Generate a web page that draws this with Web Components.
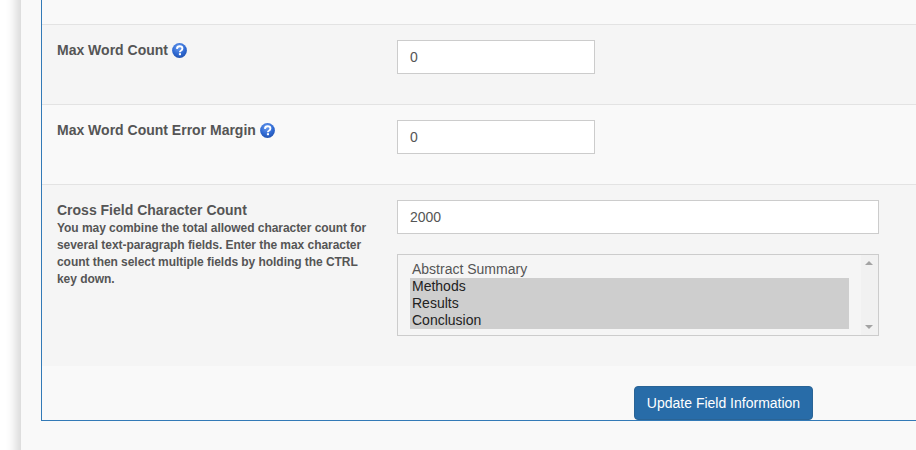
<!DOCTYPE html>
<html><head><meta charset="utf-8"><style>
html,body{margin:0;padding:0;height:450px;overflow:hidden;background:#fff}
</style></head><body>
<app-page>
<form-row label="Max Word Count" help tone="a"><text-box style="width:198px">0</text-box></form-row>
<form-row label="Max Word Count Error Margin" help tone="b"><text-box style="width:198px">0</text-box></form-row>
<form-row label="Cross Field Character Count" tone="a" tall desc="You may combine the total allowed character count for several text-paragraph fields. Enter the max character count then select multiple fields by holding the CTRL key down.">
<text-box style="width:482px">2000</text-box>
<list-box><list-opt>Abstract Summary</list-opt><list-opt selected>Methods</list-opt><list-opt selected>Results</list-opt><list-opt selected>Conclusion</list-opt></list-box>
</form-row>
<action-bar>Update Field Information</action-bar>
</app-page>
<script>
function def(name,html,init){customElements.define(name,class extends HTMLElement{constructor(){super();this.attachShadow({mode:'open'}).innerHTML=html;}connectedCallback(){init&&init(this)}})}
def('app-page',`<style>
:host{display:block;height:450px;box-sizing:border-box;padding-left:21px;background:#fff;font-family:"Liberation Sans",Arial,sans-serif;overflow:hidden}
.sheet{height:490px;margin-top:-20px;padding-top:20px;box-sizing:border-box;background:#f9f9f9;padding-left:20px;box-shadow:-8px 0 10px -3px rgba(0,0,0,.16)}
.box{height:421px;box-sizing:border-box;border-left:1px solid #337ab7;border-bottom:1px solid #337ab7;padding-top:24px}
</style><div class="sheet"><div class="box"><slot></slot></div></div>`);
def('form-row',`<style>
:host{display:block;box-sizing:border-box;height:80px;border-top:1px solid #e3e3e3;padding:15px 0 0 15px;color:#555}
:host([tone=a]){background:#f5f5f5}
:host([tone=b]){background:#f9f9f9}
:host([tall]){height:182px}
.g{display:grid;grid-template-columns:340px 1fr}
.l{font:bold 14px/20px "Liberation Sans",Arial,sans-serif;padding-top:0}
.d{font:bold 12px/17px "Liberation Sans",Arial,sans-serif;width:315px;letter-spacing:-.05px}
.c{display:flex;flex-direction:column;align-items:flex-start;gap:20px}
svg{width:15px;height:15px;vertical-align:-3px}
</style><div class="g"><div><div class="l"><span id="t"></span> <svg id="h" viewBox="0 0 15 15"><defs><radialGradient id="q" cx=".45" cy=".3" r=".75"><stop offset="0" stop-color="#6a9cf0"/><stop offset=".6" stop-color="#2f69d2"/><stop offset="1" stop-color="#2050ab"/></radialGradient></defs><circle cx="7.5" cy="7.5" r="7.4" fill="url(#q)"/><path d="M4.900 5.900C5 4.300 6.200 3.300 7.700 3.300 9.300 3.300 10.400 4.300 10.400 5.600 10.400 6.700 9.700 7.300 8.900 7.800 8.200 8.200 7.900 8.500 7.900 9.300" fill="none" stroke="#fff" stroke-width="1.900"/><rect x="6.900" y="10.200" width="2.100" height="2" fill="#fff"/></svg></div><div class="d" id="d"></div></div><div class="c"><slot></slot></div></div>`,
el=>{const s=el.shadowRoot;s.getElementById('t').textContent=el.getAttribute('label');if(!el.hasAttribute('help'))s.getElementById('h').remove();s.getElementById('d').textContent=el.getAttribute('desc')||'';});
def('text-box',`<style>
:host{display:block;box-sizing:border-box;height:34px;background:#fff;border:1px solid #ccc;padding:0 12px;font:14px/32px "Liberation Sans",Arial,sans-serif;color:#555}
</style><slot></slot>`);
def('list-box',`<style>
:host{display:block;box-sizing:border-box;width:482px;height:82px;border:1px solid #ccc;position:relative;padding:6px 0 0 12px;font:14px/17px "Liberation Sans",Arial,sans-serif;color:#555}
.sb{position:absolute;right:0;top:0;bottom:0;width:17px;background:#f1f1f1}
.u,.w{position:absolute;left:4px;width:0;height:0;border-left:4px solid transparent;border-right:4px solid transparent}
.u{top:6px;border-bottom:4px solid #a3a3a3}.w{bottom:6px;border-top:4px solid #a3a3a3}
.list{width:439px}
</style><div class="list"><slot></slot></div><div class="sb"><div class="u"></div><div class="w"></div></div>`);
def('list-opt',`<style>
:host{display:block;height:17px;padding-left:2px;white-space:nowrap}
:host([selected]){background:#cecece;color:#222}
</style><slot></slot>`);
def('action-bar',`<style>
:host{display:flex;padding:20px 0 0 592px}
.b{box-sizing:border-box;width:179px;height:34px;background:#286ca8;border:1px solid #2a6496;border-radius:4px;color:#fff;font:14px/32px "Liberation Sans",Arial,sans-serif;text-align:center;white-space:nowrap}
</style><div class="b"><slot></slot></div>`);
</script>
</body></html>
